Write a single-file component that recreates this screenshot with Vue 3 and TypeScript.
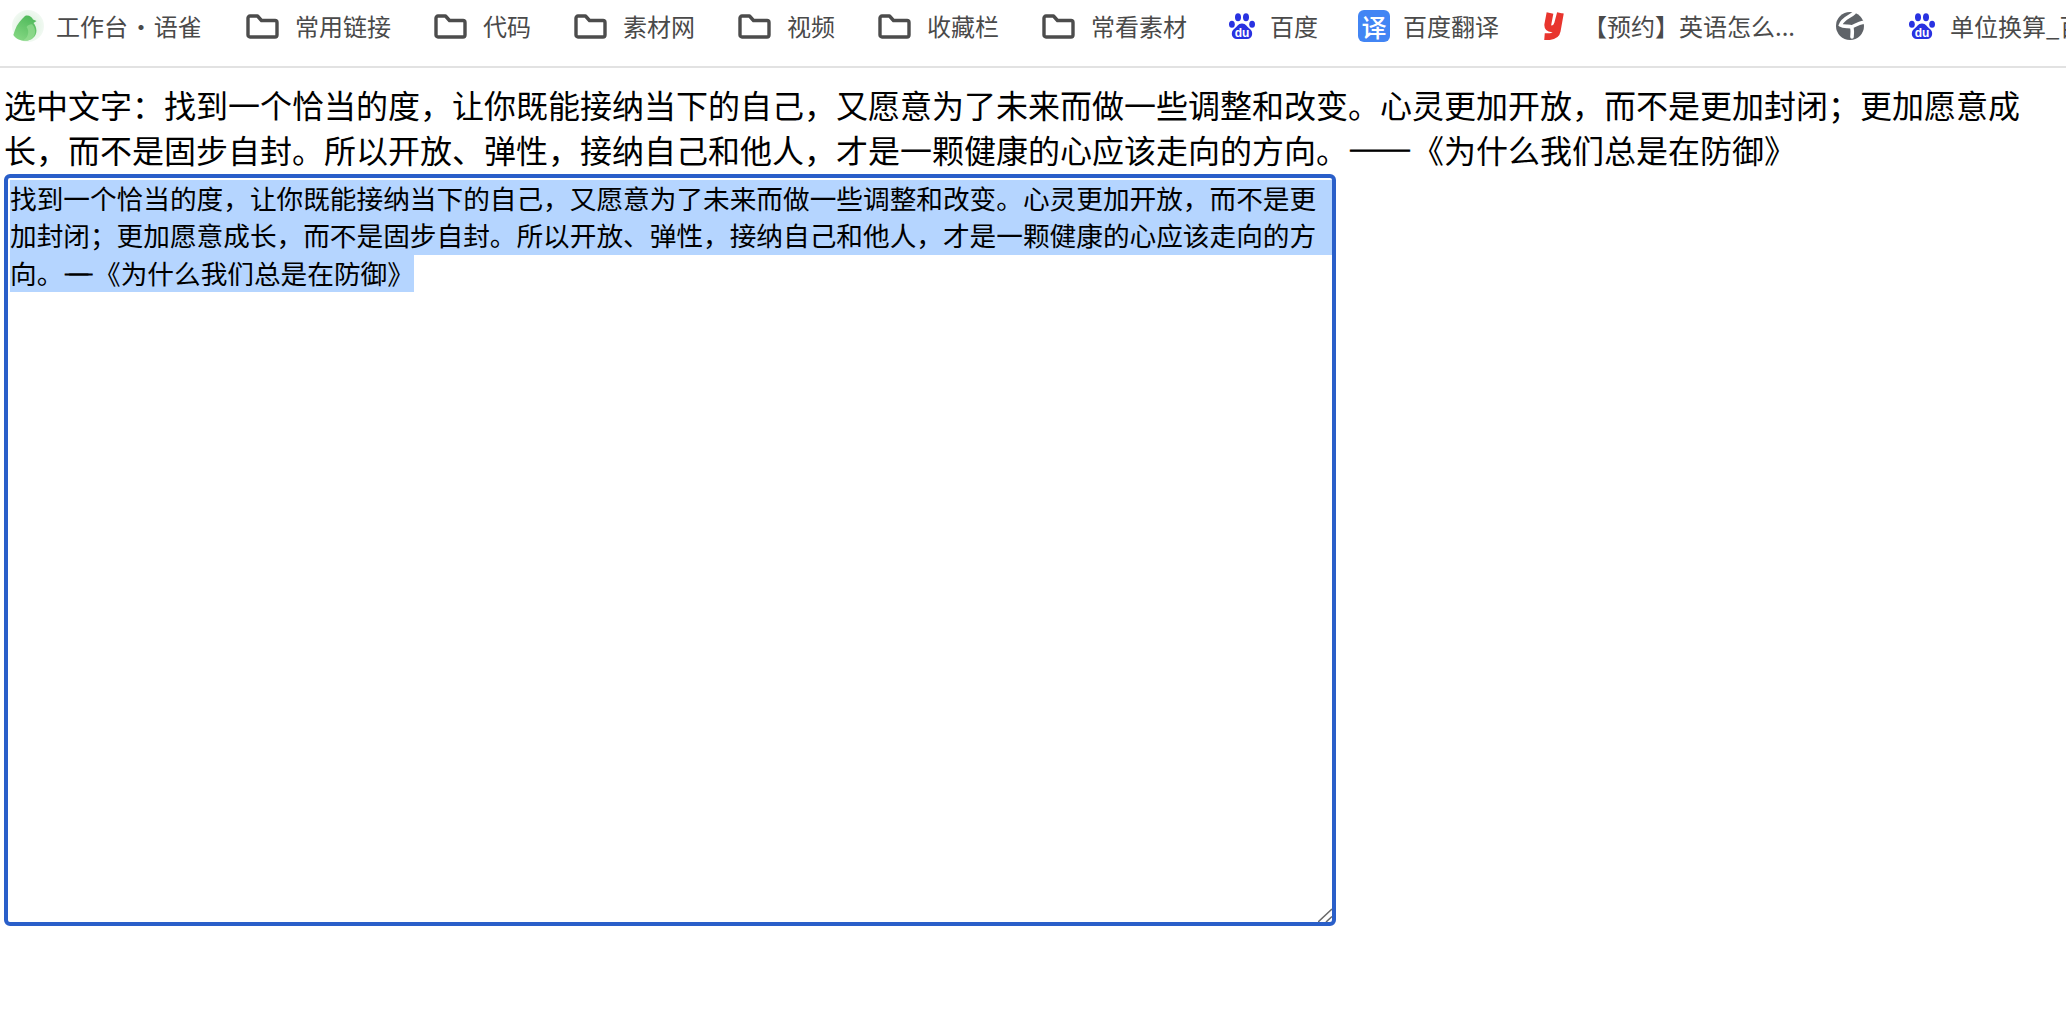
<script setup lang="ts">
type IconKind = 'yuque' | 'folder' | 'baidu' | 'fanyi' | 'youdao' | 'globe'

interface Bookmark {
  label: string
  icon: IconKind
  width: number
}

const bookmarks: Bookmark[] = [
  { label: '工作台 · 语雀', icon: 'yuque', width: 234 },
  { label: '常用链接', icon: 'folder', width: 188 },
  { label: '代码', icon: 'folder', width: 140 },
  { label: '素材网', icon: 'folder', width: 164 },
  { label: '视频', icon: 'folder', width: 140 },
  { label: '收藏栏', icon: 'folder', width: 164 },
  { label: '常看素材', icon: 'folder', width: 187 },
  { label: '百度', icon: 'baidu', width: 129 },
  { label: '百度翻译', icon: 'fanyi', width: 186 },
  { label: '【预约】英语怎么...', icon: 'youdao', width: 292 },
  { label: '', icon: 'globe', width: 73 },
  { label: '单位换算_百度搜索', icon: 'baidu', width: 260 },
]

const selectedFirst =
  '选中文字：找到一个恰当的度，让你既能接纳当下的自己，又愿意为了未来而做一些调整和改变。心灵更加开放，而不是更加封闭；更加愿意成'
const selectedSecond =
  '长，而不是固步自封。所以开放、弹性，接纳自己和他人，才是一颗健康的心应该走向的方向。'
const book = '《为什么我们总是在防御》'

const editorLines = [
  '找到一个恰当的度，让你既能接纳当下的自己，又愿意为了未来而做一些调整和改变。心灵更加开放，而不是更',
  '加封闭；更加愿意成长，而不是固步自封。所以开放、弹性，接纳自己和他人，才是一颗健康的心应该走向的方',
]
</script>

<template>
  <div class="page" lang="zh-CN">
    <nav class="bookmarks">
      <a
        v-for="(item, i) in bookmarks"
        :key="i"
        class="bookmark"
        :style="{ width: item.width + 'px' }"
      >
        <svg v-if="item.icon === 'yuque'" class="icon yuque" viewBox="0 0 32 32">
          <defs>
            <radialGradient id="halo" cx="50%" cy="50%" r="50%">
              <stop offset="0%" stop-color="#d6efd8" />
              <stop offset="100%" stop-color="#f1f9f2" />
            </radialGradient>
            <linearGradient id="bird" x1="0.7" y1="0" x2="0.2" y2="1">
              <stop offset="0%" stop-color="#4fb95a" />
              <stop offset="100%" stop-color="#86d884" />
            </linearGradient>
          </defs>
          <circle cx="16" cy="16" r="16" fill="url(#halo)" />
          <path
            d="M13 6C16 4.5 20 6.5 21 9.5L24.5 11L21.5 13C25.5 18 25.5 24 21 28C17 32 6.5 32.5 1.3 25L3 20C5 14 9 10 13 6Z"
            fill="url(#bird)"
          />
          <path d="M20.5 14.5C24 19 24 25 20 28.5C17 31 13 31 11 30.5C16 28 18 21 14.5 17C16 15 18.5 14 20.5 14.5Z" fill="#9ee19a" opacity="0.6" />
        </svg>

        <svg v-else-if="item.icon === 'folder'" class="icon folder" viewBox="0 0 33 25">
          <path
            d="M4 2H11.5L15.5 6.5H29A2 2 0 0 1 31 8.5V21A2 2 0 0 1 29 23H4A2 2 0 0 1 2 21V4A2 2 0 0 1 4 2Z"
            fill="none"
            stroke="#4c4c4c"
            stroke-width="3.4"
            stroke-linejoin="round"
          />
        </svg>

        <svg v-else-if="item.icon === 'baidu'" class="icon baidu" viewBox="0 0 26 26">
          <ellipse cx="2.9" cy="11.2" rx="2.9" ry="3.5" fill="#2932e1" />
          <ellipse cx="9" cy="4.2" rx="3" ry="4" fill="#2932e1" />
          <ellipse cx="17" cy="4.2" rx="3" ry="4" fill="#2932e1" />
          <ellipse cx="23.1" cy="11.2" rx="2.9" ry="3.5" fill="#2932e1" />
          <path d="M13 10.5C17 10.5 18 14 21 16C24.5 18.5 24 26 18 26H8C2 26 1.5 18.5 5 16C8 14 9 10.5 13 10.5Z" fill="#2932e1" />
          <text x="13" y="23.6" class="du">du</text>
        </svg>

        <span v-else-if="item.icon === 'fanyi'" class="icon fanyi">译</span>

        <svg v-else-if="item.icon === 'youdao'" class="icon youdao" viewBox="0 0 20 28">
          <path
            d="M6 1L3.8 12.5Q3.3 16.8 8 16.8Q12 16.8 13.5 12L16.4 1M16.4 1L13.2 19Q12 25.5 0.5 24.6"
            fill="none"
            stroke="#e8352e"
            stroke-width="6.8"
          />
        </svg>

        <svg v-else class="icon globe" viewBox="0 0 28 28">
          <circle cx="14" cy="14" r="14" fill="#5f6368" />
          <path
            d="M18 1C14 5 7 6 4.5 13C8 15.5 13 13.5 15.5 15C17 17.5 16 22 16 25M26.5 10.5C23 11 20 13 15.5 15"
            fill="none"
            stroke="#fff"
            stroke-width="3.6"
            stroke-linecap="round"
          />
        </svg>

        <span v-if="item.label" class="label">{{ item.label }}</span>
      </a>
    </nav>

    <main class="content">
      <p class="selected">{{ selectedFirst }}<br />{{ selectedSecond }}<span class="dash">——</span>{{ book }}</p>
      <div class="editor" role="textbox" aria-multiline="true">
        <span v-for="line in editorLines" :key="line" class="line">{{ line }}</span>
        <span class="line last">向。<span class="dash dash-lead">—</span><span class="dash">—</span>{{ book }}</span>
        <svg class="resizer" viewBox="0 0 14 14">
          <path d="M0 14L14 1M8 14L14 8.5" fill="none" stroke="#6a6a6a" stroke-width="1.6" />
        </svg>
      </div>
    </main>
  </div>
</template>

<style scoped>
.page {
  width: 2066px;
  min-height: 1028px;
  background: #fff;
  overflow: hidden;
  font-family: "Noto Sans CJK SC", "Noto Sans", sans-serif;
  color: #000;
}

.bookmarks {
  display: flex;
  box-sizing: content-box;
  height: 52px;
  padding: 0 0 14px 12px;
  border-bottom: 2px solid #e2e2e2;
  overflow: hidden;
  white-space: nowrap;
}

.bookmark {
  display: flex;
  align-items: center;
  flex: none;
  font-size: 24px;
  color: #4a4a4a;
  word-spacing: -4.5px;
}

.label {
  line-height: 32px;
}

.icon {
  flex: none;
  display: block;
}

.yuque {
  width: 32px;
  height: 32px;
  margin-right: 12px;
}

.folder {
  width: 33px;
  height: 25px;
  margin-right: 16px;
}

.baidu {
  width: 26px;
  height: 26px;
  margin-right: 15px;
}

.du {
  fill: #fff;
  font-family: "Liberation Sans", sans-serif;
  font-size: 12px;
  font-weight: 700;
  text-anchor: middle;
}

.fanyi {
  width: 32px;
  height: 32px;
  margin-right: 13px;
  border-radius: 6px;
  background: #4285f4;
  color: #fff;
  font-size: 25px;
  font-weight: 500;
  line-height: 32px;
  text-align: center;
}

.youdao {
  width: 20px;
  height: 28px;
  margin-right: 19px;
}

.globe {
  width: 28px;
  height: 28px;
}

.content {
  padding: 14px 0 0 4px;
}

.selected {
  margin: 0;
  font-size: 32px;
  line-height: 45px;
  white-space: nowrap;
}

.dash {
  -webkit-text-stroke: 0.9px #000;
}

.dash-lead {
  letter-spacing: -22.6px;
}

.editor {
  position: relative;
  box-sizing: border-box;
  width: 1332px;
  height: 752px;
  margin-top: 2px;
  padding: 2px 0 0 2px;
  border: 4px solid #2a5fc9;
  border-radius: 6px;
  background: #fff;
  font-size: 26.667px;
  line-height: 35.33px;
}

.line {
  display: block;
  padding-bottom: 2px;
  background: #b5d5ff;
  white-space: nowrap;
}

.line.last {
  display: table;
}

.resizer {
  position: absolute;
  right: 0;
  bottom: 0;
  width: 14px;
  height: 14px;
}
</style>

<style>
html,
body {
  margin: 0;
  background: #fff;
}
</style>
